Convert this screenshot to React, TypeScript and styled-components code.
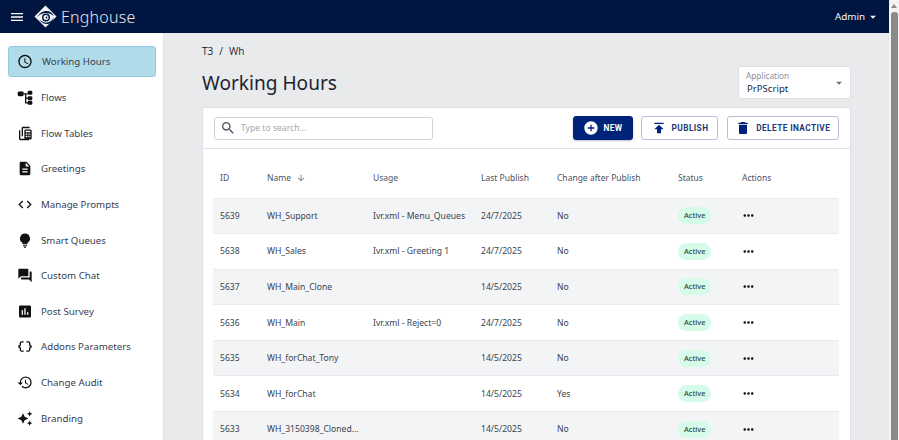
import React from "react";
import styled, { createGlobalStyle } from "styled-components";
import {
  MdAccessTime, MdDescription, MdCode, MdForum, MdAssessment,
  MdDataObject, MdHistory, MdAutoAwesome, MdAddCircle, MdPublish, MdDelete, MdSearch,
  MdArrowDownward, MdMoreHoriz, MdMenu, MdArrowDropDown,
} from "react-icons/md";

const Global = createGlobalStyle`
  html, body { margin: 0; padding: 0; height: 100%; overflow: hidden; }
  body { font-family: "Noto Sans", sans-serif; background: #e9eaec; color: #1f2937; }
  #root { height: 100%; }
`;

const Shell = styled.div`display: flex; height: 440px; width: 899px; overflow: hidden;`;
const Page = styled.div`flex: 1; min-width: 0; display: flex; flex-direction: column; overflow: hidden;`;
const ScrollTrack = styled.div`
  width: 10px; background: #f3f3f3; display: flex; flex-direction: column; align-items: stretch;
`;
const ScrollArrow = styled.div`
  width: 0; height: 0; margin: 4px auto 3px; border-left: 3px solid transparent; border-right: 3px solid transparent;
  border-bottom: 4px solid #8a8a8a;
`;
const ScrollThumb = styled.div`margin: 1px 1px 0 2px; flex: 1; background: #8a8a8a; border-radius: 3px 3px 0 0;`;

const Header = styled.header`
  height: 33px; flex: none; background: #001641; color: #fff; display: flex; align-items: center; padding: 0 11px 0 10px;
`;
const Burger = styled.span`display: flex; font-size: 16px; margin-right: 9px; margin-left: -1px;`;
const LogoMark = styled.svg`width: 23px; height: 23px; flex: none; margin-right: 4px;`;
const LogoText = styled.span`font-family: "Noto Sans", sans-serif; font-size: 16px; font-weight: 300; letter-spacing: 0.2px; color: #e6e8ee;`;
const HeaderSpacer = styled.div`flex: 1;`;
const AdminMenu = styled.div`display: flex; align-items: center; font-family: "Noto Sans", sans-serif; font-size: 9.8px; font-weight: 400; color: #f4f5f8;`;
const AdminCaret = styled.span`display: flex; font-size: 14px; margin-left: 1px; margin-right: -2px;`;

const Body = styled.div`flex: 1; display: flex; min-height: 0;`;
const Sidebar = styled.nav`
  width: 164px; flex: none; background: #fff; border-right: 1px solid #dfe1e5; padding: 13px 8px 0;
  box-sizing: border-box; display: flex; flex-direction: column;
`;
const NavItem = styled.div<{ $active?: boolean }>`
  height: ${p => (p.$active ? "31px" : "35.6px")};
  flex: none;
  width: 148px; box-sizing: border-box;
  display: flex; align-items: center; padding-left: 8px; gap: 9px;
  font-size: 9.7px; color: #374151; border-radius: 3px;
  background: ${p => (p.$active ? "#b0dbe9" : "transparent")};
  border: ${p => (p.$active ? "1px solid #90cbe3" : "0 solid transparent")};
  margin-bottom: ${p => (p.$active ? "3px" : "0")};
`;
const NavIcon = styled.span<{ $active?: boolean }>`
  width: 16px; margin-left: ${p => (p.$active ? "0" : "1px")}; margin-right: ${p => (p.$active ? "0" : "-1px")};
  display: flex; justify-content: center; font-size: 17px; color: #111;
`;

const Main = styled.main`flex: 1; min-width: 0; padding: 11px 38px 0 38px; overflow: hidden;`;
const Crumbs = styled.div`font-size: 10px; color: #2b3340; display: flex; gap: 6px; line-height: 14px;`;
const TitleRow = styled.div`display: flex; justify-content: space-between; margin-top: 8px; height: 41px; align-items: flex-start;`;
const Title = styled.h1`margin: 3px 0 0; font-size: 19.1px; font-weight: 400; color: #1b2430; line-height: 28px;`;
const AppSelect = styled.div`
  width: 113px; height: 33px; box-sizing: border-box; background: #fff; border: 1px solid #dcdfe4; border-radius: 3px;
  position: relative; padding: 3px 7px;
`;
const AppLabel = styled.div`font-size: 8.2px; color: #8a8f98; line-height: 11px;`;
const AppValue = styled.div`font-size: 9.6px; color: #222b38; line-height: 14px; padding-left: 1px; margin-top: 1px;`;
const AppCaret = styled.span`position: absolute; right: 4px; top: 9px; display: flex; font-size: 14px; color: #6b7078;`;

const Card = styled.section`background: #fff; border: 1px solid #dcdfe4; border-radius: 3px 3px 0 0; width: 649px; box-sizing: border-box;`;
const Toolbar = styled.div`
  height: 41px; box-sizing: border-box; border-bottom: 1px solid #dfe1e5; display: flex; align-items: center; padding: 0 11px 0 11px;
`;
const Search = styled.div`
  width: 219px; height: 23px; box-sizing: border-box; border: 1px solid #cfd3d9; border-radius: 3px; display: flex; align-items: center;
  padding-left: 5px; gap: 5px; font-size: 8.6px; color: #a3a8b0;
`;
const SearchIcon = styled.span`display: flex; font-size: 16px; color: #4b5563;`;
const ToolSpacer = styled.div`flex: 1;`;
const ToolButton = styled.button<{ $primary?: boolean; $w: number }>`
  width: ${p => p.$w}px; height: 24px; box-sizing: border-box; margin-left: 8.5px; border-radius: 3px; padding: 0;
  display: flex; align-items: center; justify-content: center; gap: 5px;
  font-family: Roboto, sans-serif; font-size: 8.3px; font-weight: 700; letter-spacing: 0.4px;
  color: ${p => (p.$primary ? "#fff" : "#1d3a78")};
  background: ${p => (p.$primary ? "#00237a" : "#fff")};
  border: 1px solid ${p => (p.$primary ? "#00237a" : "#b4bfd8")};
  box-shadow: ${p => (p.$primary ? "0 1px 2px rgba(0,0,0,.25)" : "none")};
  svg { font-size: 16px; color: ${p => (p.$primary ? "#fff" : "#00237a")}; }
`;

const Table = styled.table`border-collapse: collapse; table-layout: fixed; width: 626px; margin: 10px 10px 0 10px; font-size: 8.6px;`;
const Th = styled.th<{ $w: number }>`
  width: ${p => p.$w}px; height: 39px; box-sizing: border-box; padding: 0 0 1px 7px; text-align: left; font-weight: 400; color: #4b5361; font-size: 8.5px;
  border-bottom: 1px solid #e9eaed;
`;
const SortIcon = styled.span`display: inline-flex; font-size: 10px; margin-left: 5px; vertical-align: -1.5px; color: #6b7280;`;
const Tr = styled.tr<{ $odd: boolean }>`background: ${p => (p.$odd ? "#f3f4f6" : "#fff")};`;
const Td = styled.td`height: 35.6px; box-sizing: border-box; padding: 0 0 0 7px; color: #3a4250; border-bottom: 1px solid #e9eaed; white-space: nowrap; overflow: hidden;`;
const Badge = styled.span`
  display: inline-block; background: #d5fbe9; color: #33483f; font-size: 7.4px; font-weight: 500; height: 17px; line-height: 17px; padding: 0 6px;
  border-radius: 9px;
`;
const More = styled.span`display: flex; font-size: 15px; color: #111; margin-left: -1px;`;

const FlowTablesIcon = () => (
  <svg width="1em" height="1em" viewBox="0 0 24 24" fill="currentColor">
    <path d="M3 7h2v13h13v2H5a2 2 0 0 1-2-2V7z" />
    <path d="M7 4a2 2 0 0 1 2-2h10v2H9v12H7V4z" />
    <path fillRule="evenodd" d="M11 8a2 2 0 0 1 2-2h7a2 2 0 0 1 2 2v11a2 2 0 0 1-2 2h-7a2 2 0 0 1-2-2V8zm2 0v2h7V8h-7zm0 4v2h2v-2h-2zm3 0v2h1.500v-2H16zm2.500 0v2H20v-2h-1.500zM13 15.500v2h2v-2h-2zm3 0v2h1.500v-2H16zm2.500 0v2H20v-2h-1.500z" />
  </svg>
);

const FlowIcon = () => (
  <svg width="1em" height="1em" viewBox="0 0 24 24" fill="currentColor">
    <rect x="1" y="3" width="9" height="7" rx="2" />
    <rect x="16" y="2" width="7" height="6" rx="2" />
    <rect x="16" y="10" width="7" height="6" rx="2" />
    <rect x="16" y="17" width="7" height="6" rx="2" />
    <path d="M10 5.500h6v2h-6zM12 6h2v14h-2zM12 12h5v2h-5zM12 19h5v2h-5z" />
  </svg>
);

const BulbIcon = () => (
  <svg width="1em" height="1em" viewBox="0 0 24 24" fill="currentColor">
    <path d="M12 1.500a7.500 7.500 0 0 0-4.500 13.500c.8.700 1 1.400 1 2.500h7c0-1.100.2-1.800 1-2.500A7.500 7.500 0 0 0 12 1.500z" />
    <path d="M9 19h6v1.500H9zM10.500 21.500h3V23h-3z" />
  </svg>
);

const Logo = () => (
  <LogoMark viewBox="0 0 46 46">
    <path d="M23 1 45 23 23 45 1 23Z" fill="#f2f3f5" />
    <path d="M6 24C12 15 19 12 25 12c7 0 12 4 15 10-5-4-10-6-16-6-7 0-12 3-18 8z" fill="#001641" />
    <path d="M10 29c6 5 11 7 17 6 6-1 10-5 12-10-1 8-6 13-13 13-7 0-12-4-16-9z" fill="#001641" />
    <circle cx="24" cy="25" r="6.500" fill="none" stroke="#001641" strokeWidth="3" />
    <circle cx="25" cy="25" r="1.800" fill="#001641" />
  </LogoMark>
);

const nav: [string, React.ReactNode][] = [
  ["Flows", <FlowIcon />],
  ["Flow Tables", <FlowTablesIcon />],
  ["Greetings", <MdDescription />],
  ["Manage Prompts", <MdCode />],
  ["Smart Queues", <BulbIcon />],
  ["Custom Chat", <MdForum />],
  ["Post Survey", <MdAssessment />],
  ["Addons Parameters", <MdDataObject />],
  ["Change Audit", <MdHistory />],
  ["Branding", <MdAutoAwesome />],
];

const rows = [
  ["5639", "WH_Support", "Ivr.xml - Menu_Queues", "24/7/2025", "No"],
  ["5638", "WH_Sales", "Ivr.xml - Greeting 1", "24/7/2025", "No"],
  ["5637", "WH_Main_Clone", "", "14/5/2025", "No"],
  ["5636", "WH_Main", "Ivr.xml - Reject=0", "24/7/2025", "No"],
  ["5635", "WH_forChat_Tony", "", "14/5/2025", "No"],
  ["5634", "WH_forChat", "", "14/5/2025", "Yes"],
  ["5633", "WH_3150398_Cloned...", "", "14/5/2025", "No"],
];

export default function App() {
  return (
    <Shell>
      <Global />
      <Page>
        <Header>
          <Burger><MdMenu /></Burger>
          <Logo />
          <LogoText>Enghouse</LogoText>
          <HeaderSpacer />
          <AdminMenu>Admin<AdminCaret><MdArrowDropDown /></AdminCaret></AdminMenu>
        </Header>
        <Body>
          <Sidebar>
            <NavItem $active><NavIcon $active><MdAccessTime /></NavIcon>Working Hours</NavItem>
            {nav.map(([label, icon]) => (
              <NavItem key={label}><NavIcon>{icon}</NavIcon>{label}</NavItem>
            ))}
          </Sidebar>
          <Main>
            <Crumbs><span>T3</span><span>/</span><span>Wh</span></Crumbs>
            <TitleRow>
              <Title>Working Hours</Title>
              <AppSelect>
                <AppLabel>Application</AppLabel>
                <AppValue>PrPScript</AppValue>
                <AppCaret><MdArrowDropDown /></AppCaret>
              </AppSelect>
            </TitleRow>
            <Card>
              <Toolbar>
                <Search><SearchIcon><MdSearch /></SearchIcon>Type to search...</Search>
                <ToolSpacer />
                <ToolButton $primary $w={60}><MdAddCircle />NEW</ToolButton>
                <ToolButton $w={77}><MdPublish />PUBLISH</ToolButton>
                <ToolButton $w={112.5}><MdDelete />DELETE INACTIVE</ToolButton>
              </Toolbar>
              <Table>
                <thead>
                  <tr>
                    <Th $w={47}>ID</Th>
                    <Th $w={106}>Name<SortIcon><MdArrowDownward /></SortIcon></Th>
                    <Th $w={108}>Usage</Th>
                    <Th $w={76}>Last Publish</Th>
                    <Th $w={121}>Change after Publish</Th>
                    <Th $w={64}>Status</Th>
                    <Th $w={104}>Actions</Th>
                  </tr>
                </thead>
                <tbody>
                  {rows.map((r, i) => (
                    <Tr key={r[0]} $odd={i % 2 === 0}>
                      {r.map((c, j) => <Td key={j}>{c}</Td>)}
                      <Td><Badge>Active</Badge></Td>
                      <Td><More><MdMoreHoriz /></More></Td>
                    </Tr>
                  ))}
                </tbody>
              </Table>
            </Card>
          </Main>
        </Body>
      </Page>
      <ScrollTrack>
        <ScrollArrow />
        <ScrollThumb />
      </ScrollTrack>
    </Shell>
  );
}
